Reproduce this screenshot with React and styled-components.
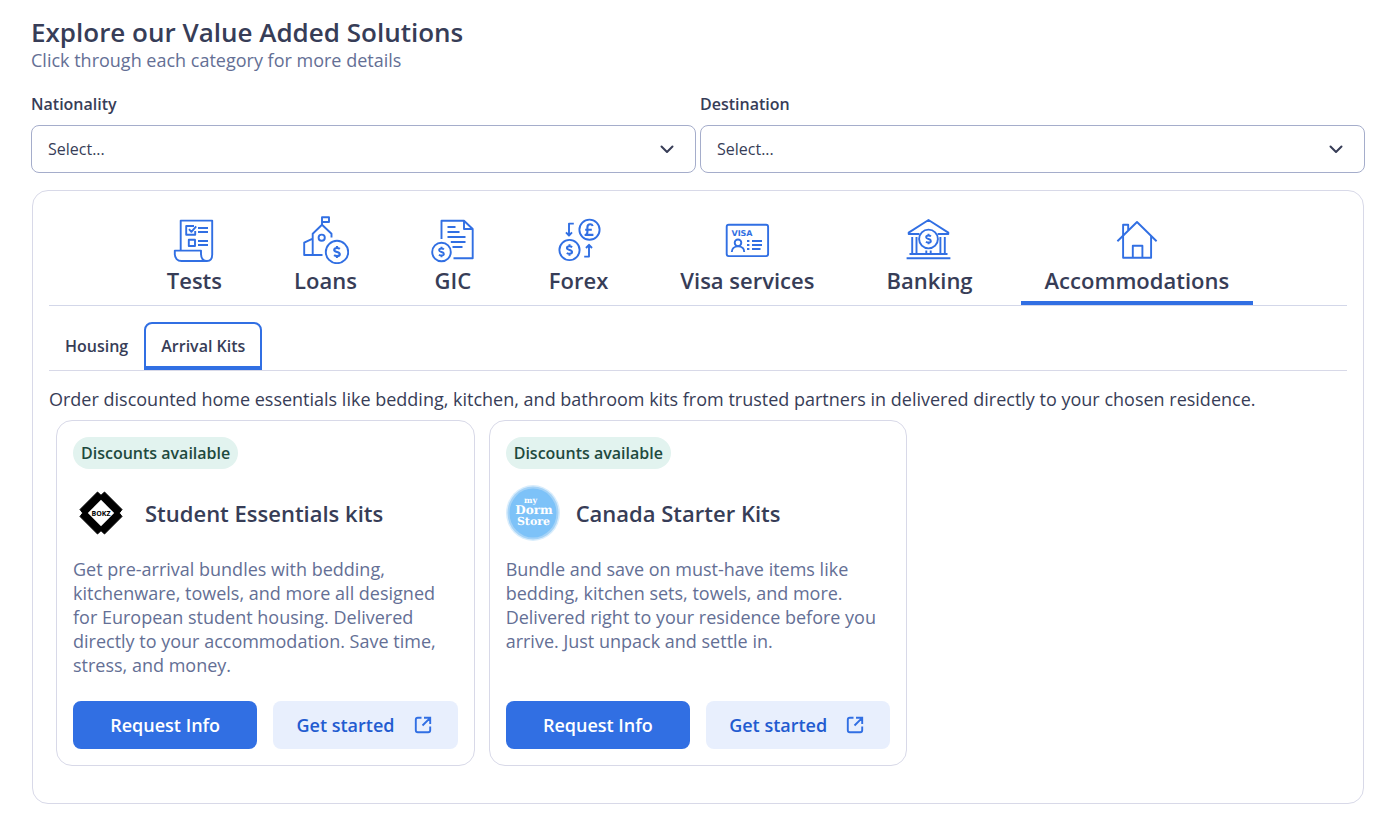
import React, { useState } from 'react';
import styled, { createGlobalStyle } from 'styled-components';

const GlobalStyle = createGlobalStyle`
    * {
        box-sizing: border-box;
    }

    body {
        margin: 0;
        background-color: #fff;
        color: #373d57;
        font-family: 'Open Sans', sans-serif;
        font-size: 16px;
        line-height: 24px;
    }

    button, select {
        font-family: inherit;
        color: inherit;
    }
`;

const Page = styled.main`
    padding: 16px 29px 16px 31px;
`;

const Title = styled.h1`
    margin: 0;
    font-size: 26px;
    line-height: 32px;
    font-weight: 600;
`;

const Subtitle = styled.p`
    margin: 0;
    font-size: 18px;
    line-height: 24px;
    color: #646f95;
`;

const Filters = styled.div`
    display: flex;
    gap: 4px;
    margin-top: 20px;

    @media only screen and (max-width: 600px) {
        flex-direction: column;
        gap: 16px;
    }
`;

const Field = styled.div`
    flex: 1;
`;

const Label = styled.label`
    display: block;
    font-weight: 600;
    margin-bottom: 9px;
`;

const SelectWrap = styled.div`
    display: grid;
    align-items: center;

    > * {
        grid-area: 1 / 1;
    }

    svg {
        justify-self: end;
        margin-right: 17px;
        pointer-events: none;
    }
`;

const Select = styled.select`
    appearance: none;
    width: 100%;
    height: 48px;
    padding: 0 16px;
    border: 1px solid #a5adcb;
    border-radius: 8px;
    background-color: #fff;
    font-size: 16px;
`;

const Panel = styled.section`
    margin: 17px 1px 0;
    padding: 16px 16px 37px;
    border: 1px solid #d8d9e8;
    border-radius: 16px;
`;

const Tabs = styled.div`
    display: flex;
    flex-wrap: wrap;
    justify-content: center;
    gap: 24px;
    border-bottom: 1px solid #d3d7e9;
`;

const Tab = styled.button`
    display: flex;
    flex-direction: column;
    align-items: center;
    padding: 9px 24px 5px;
    border: none;
    border-bottom: 4px solid ${props => props.$active ? '#316fe3' : 'transparent'};
    background: none;
    font-size: 22px;
    line-height: 32px;
    font-weight: 600;
    cursor: pointer;
`;

const SubTabs = styled.div`
    display: flex;
    margin-top: 16px;
    border-bottom: 1px solid #d8d9e8;
`;

const SubTab = styled.button`
    height: 48px;
    padding: ${props => props.$active ? '2px 15px 0' : '2px 16px 0'};
    border: ${props => props.$active ? '2px solid #316fe3' : 'none'};
    border-bottom: 4px solid ${props => props.$active ? '#316fe3' : 'transparent'};
    border-top: 2px solid ${props => props.$active ? '#316fe3' : 'transparent'};
    border-radius: 8px 8px 0 0;
    background: none;
    font-size: 16px;
    font-weight: 600;
    cursor: pointer;
`;

const Intro = styled.p`
    margin: 16px 0 9px;
    font-size: 18px;
    line-height: 24px;
`;

const Cards = styled.div`
    display: grid;
    grid-template-columns: repeat(3, 1fr);
    gap: 14px;
    padding: 0 7px;

    @media only screen and (max-width: 1100px) {
        grid-template-columns: repeat(auto-fit, minmax(360px, 1fr));
    }
`;

const CardBox = styled.article`
    display: flex;
    flex-direction: column;
    align-items: flex-start;
    padding: 16px;
    border: 1px solid #d8d9e8;
    border-radius: 16px;
`;

const Badge = styled.span`
    padding: 4px 8px;
    border-radius: 16px;
    background-color: #e2f3ef;
    color: #1e4a3e;
    font-weight: 600;
`;

const CardHead = styled.div`
    display: flex;
    align-items: center;
    gap: 16px;
    margin: 16px 0;
`;

const CardTitle = styled.h2`
    margin: 0;
    font-size: 22px;
    line-height: 28px;
    font-weight: 600;
`;

const CardText = styled.p`
    flex: 1;
    margin: 0 0 24px;
    font-size: 18px;
    line-height: 24px;
    color: #646f95;
`;

const Actions = styled.div`
    display: flex;
    gap: 16px;
    width: 100%;
`;

const Button = styled.button`
    display: flex;
    flex: 1;
    align-items: center;
    justify-content: center;
    gap: 16px;
    height: 48px;
    padding: 0;
    border: none;
    border-radius: 8px;
    background-color: ${props => props.$light ? '#e8effd' : '#316fe3'};
    color: ${props => props.$light ? '#225bd0' : '#fff'};
    font-size: 18px;
    font-weight: 600;
    white-space: nowrap;
    cursor: pointer;
`;

const Line = styled.svg`
    flex-shrink: 0;
    fill: none;
    stroke: #316fe3;
    stroke-width: 1.9;
    stroke-linejoin: round;
`;

const SvgText = styled.text`
    fill: ${props => props.$color || '#316fe3'};
    stroke: none;
    font-family: ${props => props.$family || "'DejaVu Sans', sans-serif"};
    font-weight: 700;
    text-anchor: middle;
    text-rendering: geometricPrecision;
`;

const serif = "'DejaVu Serif', serif";

const Dollar = ({ x, y, size = 1 }) => (
    <g transform={`translate(${x} ${y}) scale(${size})`} strokeWidth="2.3">
        <path d="M3 -3.2C2 -4 1 -4.2 0 -4.2C-1.8 -4.2 -2.9 -3.4 -2.9 -2.2C-2.9 -0.9 -1.7 -0.5 0 0C1.8 0.5 2.9 1 2.9 2.3C2.9 3.5 1.8 4.3 0 4.3C-1.1 4.3 -2.3 4 -3.1 3.4M0 -6.4V-4.2M0 4.3V6.4" />
    </g>
);

const TestsIcon = () => (
    <Line width="48" height="48" viewBox="0 0 48 48">
        <path d="M10.7 34.6V4.6H42.2V38.5C42.2 42.6 40.2 45 37 45H11.5C7.4 45 4.8 42.2 4.8 38V34.6H31V37.5C31 42 33 45 37 45" />
        <path d="M24 10H16.2V18.8H25.2V15M19 13.2L21.4 15.8L26.2 10.4" />
        <path d="M28 12H38M28 16H38M28 25H38M28 29H38M18.8 23.8H25V30H18.8Z" />
    </Line>
);

const LoansIcon = () => (
    <Line width="48" height="48" viewBox="0 0 48 48">
        <path d="M21 9.5V1.2H28V6H21" />
        <path d="M30.5 21.5V17.7L21 8.8L11.7 17.7V39M11.7 22.7L3.2 26.7V39H21.5" />
        <circle cx="20.7" cy="21.7" r="3.1" />
        <circle cx="36" cy="36" r="11.2" />
        <Dollar x={36} y={36} size={0.95} />
    </Line>
);

const GicIcon = () => (
    <Line width="48" height="48" viewBox="0 0 48 48">
        <path d="M12.5 23V4.7H35L43.7 13V42.2H24.5M35 4.7V13H43.7" />
        <path d="M18.5 11H26.5M18.5 16H30.5M18.5 21H36.5M21.8 26H36.5M23.5 31H33.5" />
        <circle cx="12.5" cy="36" r="9.3" />
        <Dollar x={12.5} y={36} size={0.82} />
    </Line>
);

const ForexIcon = () => (
    <Line width="48" height="48" viewBox="0 0 48 48">
        <path d="M18.8 7.6H14V19.6M11 16.4L14 19.6L17 16.4M29.2 40.6H34V28.8M31 32L34 28.8L37 32" />
        <circle cx="34.5" cy="13.7" r="10.1" />
        <path strokeWidth="2.1" d="M37.7 10C37.2 8.6 36.2 8.2 35.3 8.2C33.5 8.2 32.4 9.4 32.4 11.2V16C32.4 17.5 31.6 18.5 30.4 18.9H38.4M30.2 13.8H36.8" />
        <circle cx="14.5" cy="34" r="10.1" />
        <Dollar x={14.5} y={34} size={0.88} />
    </Line>
);

const VisaIcon = () => (
    <Line width="48" height="48" viewBox="0 0 48 48">
        <rect x="3.7" y="8.7" width="41.4" height="31.4" rx="2" />
        <SvgText x="19" y="20" fontSize="8">VISA</SvgText>
        <circle cx="15" cy="26.8" r="3.3" />
        <path d="M8.8 36C8.8 32.5 11.2 30.4 15 30.4C18.8 30.4 21.2 32.5 21.2 36" />
        <path d="M24 25H26.4M29 25H39M24 29H26.4M29 29H39M24 33H26.4M29 33H37.5" />
    </Line>
);

const BankingIcon = () => (
    <Line width="48" height="48" viewBox="0 0 48 48">
        <path d="M14.5 18H3.7V16.6L23.5 4L43.3 16.6V18H32.6" />
        <path d="M7.2 21V38M11.5 21V38M35.4 21V38M39.8 21V38M21.3 34.5V38M25.7 34.5V38M4.5 38H42.5M1.6 42.3H45.4" />
        <circle cx="23.5" cy="23" r="9.4" />
        <Dollar x={23.5} y={23} size={0.82} />
    </Line>
);

const HouseIcon = () => (
    <Line width="48" height="48" viewBox="0 0 48 48">
        <path d="M4.4 25.3L24 6L43.6 25.3" />
        <path d="M15.2 14V8.8H10.1V41.7H38.1V20M19.8 41.7V29.8H29.4V41.7" />
    </Line>
);

const Chevron = () => (
    <svg width="24" height="24" viewBox="0 0 24 24" fill="none" stroke="#373d57" strokeWidth="2" strokeLinecap="round" strokeLinejoin="round">
        <path d="M6.5 9.5L12 15L17.5 9.5" />
    </svg>
);

const ExternalIcon = () => (
    <svg width="24" height="24" viewBox="0 0 24 24" fill="none" stroke="#316fe3" strokeWidth="1.9">
        <path d="M10.5 4.8H6.8Q4.8 4.8 4.8 6.8V17.2Q4.8 19.2 6.8 19.2H17.2Q19.2 19.2 19.2 17.2V13.5M13 4.8H19.2V11M19.2 4.8L11.5 12.5" />
    </svg>
);

const BokzLogo = () => (
    <svg width="56" height="56" viewBox="0 0 56 56" role="img" aria-label="Bokz">
        <path d="M24.5 7L28 10.3L31.5 7L49 24.5L46.3 28L49 31.5L31.5 49L28 45.7L24.5 49L7 31.5L9.7 28L7 24.5Z" fill="#000" stroke="#000" strokeLinejoin="round" />
        <path d="M28 14.8L41.2 28L28 41.2L14.8 28Z" fill="#fff" />
        <SvgText x="28" y="30.5" fontSize="7" $color="#000" $family="'Open Sans', sans-serif">BOKZ</SvgText>
    </svg>
);

const DormLogo = () => (
    <svg width="54" height="56" viewBox="0 0 54 56" role="img" aria-label="My Dorm Store">
        <ellipse cx="27" cy="28" rx="27" ry="28" fill="#d9edfc" />
        <ellipse cx="27" cy="28" rx="25.5" ry="26.5" fill="#a5d3f7" />
        <ellipse cx="27" cy="28" rx="23.5" ry="24.5" fill="#7dc2f8" />
        <SvgText x="24.5" y="18" fontSize="8" $color="#fff" $family={serif}>my</SvgText>
        <SvgText x="28" y="29" fontSize="12" $color="#fff" $family={serif}>Dorm</SvgText>
        <SvgText x="27.5" y="40" fontSize="11" $color="#fff" $family={serif}>Store</SvgText>
    </svg>
);

const tabs = [
    { name: 'Tests', Icon: TestsIcon },
    { name: 'Loans', Icon: LoansIcon },
    { name: 'GIC', Icon: GicIcon },
    { name: 'Forex', Icon: ForexIcon },
    { name: 'Visa services', Icon: VisaIcon },
    { name: 'Banking', Icon: BankingIcon },
    { name: 'Accommodations', Icon: HouseIcon },
];

const kits = [
    {
        title: 'Student Essentials kits',
        Logo: BokzLogo,
        text: 'Get pre-arrival bundles with bedding, kitchenware, towels, and more all designed for European student housing. Delivered directly to your accommodation. Save time, stress, and money.',
    },
    {
        title: 'Canada Starter Kits',
        Logo: DormLogo,
        text: 'Bundle and save on must-have items like bedding, kitchen sets, towels, and more. Delivered right to your residence before you arrive. Just unpack and settle in.',
    },
];

const SelectField = ({ id, label }) => (
    <Field>
        <Label htmlFor={id}>{label}</Label>
        <SelectWrap>
            <Select id={id}>
                <option>Select...</option>
            </Select>
            <Chevron />
        </SelectWrap>
    </Field>
);

const Card = ({ title, text, Logo }) => (
    <CardBox>
        <Badge>Discounts available</Badge>
        <CardHead>
            <Logo />
            <CardTitle>{title}</CardTitle>
        </CardHead>
        <CardText>{text}</CardText>
        <Actions>
            <Button>Request Info</Button>
            <Button $light>Get started <ExternalIcon /></Button>
        </Actions>
    </CardBox>
);

const App = () => {
    const [tab, setTab] = useState('Accommodations');
    const [subTab, setSubTab] = useState('Arrival Kits');

    return (
        <Page>
            <GlobalStyle />
            <Title>Explore our Value Added Solutions</Title>
            <Subtitle>Click through each category for more details</Subtitle>
            <Filters>
                <SelectField id="nationality" label="Nationality" />
                <SelectField id="destination" label="Destination" />
            </Filters>
            <Panel>
                <Tabs role="tablist">
                    {tabs.map(({ name, Icon }) => (
                        <Tab key={name} role="tab" aria-selected={tab === name} $active={tab === name} onClick={() => setTab(name)}>
                            <Icon />
                            {name}
                        </Tab>
                    ))}
                </Tabs>
                <SubTabs role="tablist">
                    {['Housing', 'Arrival Kits'].map(name => (
                        <SubTab key={name} role="tab" aria-selected={subTab === name} $active={subTab === name} onClick={() => setSubTab(name)}>
                            {name}
                        </SubTab>
                    ))}
                </SubTabs>
                <Intro>Order discounted home essentials like bedding, kitchen, and bathroom kits from trusted partners in delivered directly to your chosen residence.</Intro>
                <Cards>
                    {kits.map(kit => <Card key={kit.title} {...kit} />)}
                </Cards>
            </Panel>
        </Page>
    )
}

export default App
